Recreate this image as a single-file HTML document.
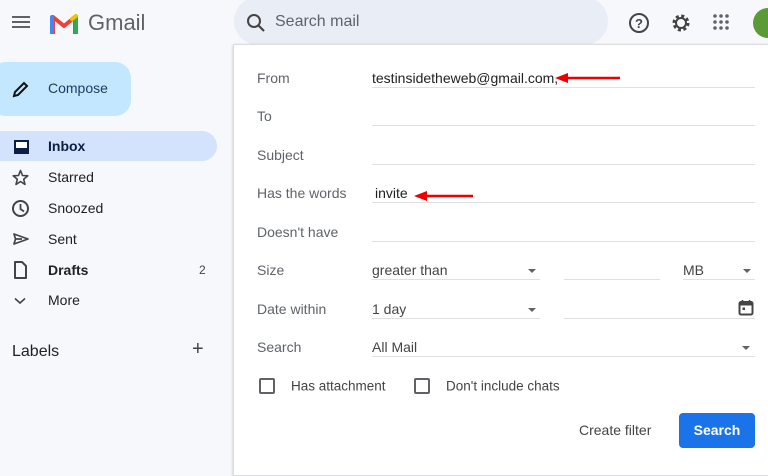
<!DOCTYPE html><html><head><style>
body{margin:0;width:768px;height:462px;overflow:hidden;background:#f6f8fc;font-family:"Liberation Sans",sans-serif;position:relative;color:#444}
.a{position:absolute}
.lbl{position:absolute;left:257px;font-size:14px;color:#5f6368;transform:translateY(-50%)}
.val{position:absolute;font-size:14px;color:#202124;transform:translateY(-50%)}
.ul{position:absolute;height:1px;background:#e0e0e0}
.nav{position:absolute;left:48px;font-size:14px;color:#202124;transform:translateY(-50%)}
.tri{position:absolute;width:0;height:0;border-left:4px solid transparent;border-right:4px solid transparent;border-top:4px solid #5f6368}
.cb{position:absolute;width:12px;height:12px;border:2px solid #5f6368;border-radius:2px}
</style></head><body>
<!-- header -->
<div class="a" style="left:12px;top:16px;width:18px;height:2px;background:#5f6368;box-shadow:0 5px 0 #5f6368,0 10px 0 #5f6368"></div>
<svg class="a" style="left:49px;top:12px" width="30" height="22" viewBox="0 0 30 22"><path d="M4 22V5L15 14 26 5V22" fill="none" stroke="#ea4335" stroke-width="4" stroke-linejoin="round"/><path d="M3 22V5" stroke="#4285f4" stroke-width="4" stroke-linecap="round"/><path d="M27 22V5" stroke="#34a853" stroke-width="4" stroke-linecap="round"/><path d="M23 7L27 4" stroke="#fbbc04" stroke-width="4" stroke-linecap="round"/></svg>
<div class="a" style="left:88px;top:10px;font-size:22px;color:#5f6368">Gmail</div>
<div class="a" style="left:234px;top:-3px;width:374px;height:48px;background:#e9eef6;border-radius:24px"></div>
<svg class="a" style="left:246px;top:13px" width="20" height="20"><circle cx="8" cy="8" r="6" fill="none" stroke="#444" stroke-width="2"/><path d="M12.5 12.5L18 18" stroke="#444" stroke-width="2.2"/></svg>
<div class="a" style="left:275px;top:13px;font-size:16px;color:#5f6368">Search mail</div>
<svg class="a" style="left:628px;top:12px" width="22" height="22"><circle cx="11" cy="11" r="9" fill="none" stroke="#444" stroke-width="2"/><text x="11" y="16" font-size="13" text-anchor="middle" fill="#444" font-family="Liberation Sans" font-weight="bold">?</text></svg>
<svg class="a" style="left:670px;top:12px" width="22" height="22"><circle cx="11" cy="11" r="7" fill="none" stroke="#444" stroke-width="3" stroke-dasharray="3 2.5"/><circle cx="11" cy="11" r="5" fill="none" stroke="#444" stroke-width="2"/></svg>
<svg class="a" style="left:713px;top:14px" width="16" height="16" fill="#5f6368"><circle cx="2" cy="2" r="1.8"/><circle cx="8" cy="2" r="1.8"/><circle cx="14" cy="2" r="1.8"/><circle cx="2" cy="8" r="1.8"/><circle cx="8" cy="8" r="1.8"/><circle cx="14" cy="8" r="1.8"/><circle cx="2" cy="14" r="1.8"/><circle cx="8" cy="14" r="1.8"/><circle cx="14" cy="14" r="1.8"/></svg>
<div class="a" style="left:753px;top:8px;width:30px;height:30px;border-radius:50%;background:#5a9a37"></div>
<!-- sidebar -->
<div class="a" style="left:-10px;top:62px;width:141px;height:54px;background:#c2e7ff;border-radius:16px"></div>
<svg class="a" style="left:11px;top:79px" width="20" height="20"><path d="M3 17L4 13 13 4 16 7 7 16Z" fill="none" stroke="#111" stroke-width="2"/></svg>
<div class="a" style="left:48px;top:80px;font-size:14px;color:#1f3a5f">Compose</div>
<div class="a" style="left:0;top:131px;width:217px;height:30px;background:#d3e3fd;border-radius:0 16px 16px 0"></div>
<div class="a" style="left:14px;top:140px;width:11px;height:10px;border:2px solid #0b1f44;background:#fff;box-shadow:inset 0 -4px 0 #0b1f44"></div>
<div class="nav" style="top:146px;font-weight:bold;color:#0b1f44">Inbox</div>
<svg class="a" style="left:12px;top:169px" width="17" height="17"><path d="M8.5 1.5L10.5 6.5 15.8 6.8 11.7 10.2 13 15.4 8.5 12.5 4 15.4 5.3 10.2 1.2 6.8 6.5 6.5Z" fill="none" stroke="#444" stroke-width="1.6" stroke-linejoin="round"/></svg>
<div class="nav" style="top:177px">Starred</div>
<svg class="a" style="left:11px;top:199px" width="19" height="19"><circle cx="9.5" cy="9.5" r="7.5" fill="none" stroke="#444" stroke-width="2"/><path d="M9.5 5V10L13 12.5" fill="none" stroke="#444" stroke-width="1.8"/></svg>
<div class="nav" style="top:208px">Snoozed</div>
<svg class="a" style="left:12px;top:232px" width="18" height="14"><path d="M2 2L16 7 2 12 3.5 7Z M3.5 7H10" fill="none" stroke="#444" stroke-width="1.7" stroke-linejoin="round"/></svg>
<div class="nav" style="top:239px">Sent</div>
<svg class="a" style="left:13px;top:261px" width="15" height="18"><path d="M2 1H9L13 5V17H2Z" fill="none" stroke="#444" stroke-width="2" stroke-linejoin="round"/></svg>
<div class="nav" style="top:270px;font-weight:bold">Drafts</div>
<div class="a" style="left:199px;top:263px;font-size:12px;color:#444">2</div>
<svg class="a" style="left:14px;top:297px" width="12" height="8"><path d="M1 1.5L6 6 11 1.5" fill="none" stroke="#444" stroke-width="1.6"/></svg>
<div class="nav" style="top:300px">More</div>
<div class="a" style="left:12px;top:343px;font-size:16px;color:#202124">Labels</div>
<div class="a" style="left:192px;top:338px;font-size:20px;color:#444">+</div>
<!-- panel -->
<div class="a" style="left:233px;top:44px;width:540px;height:430px;background:#fff;border:1px solid #dadce0;box-shadow:0 1px 3px rgba(0,0,0,.2)"></div>
<div class="lbl" style="top:78px">From</div><div class="val" style="left:372px;top:78px">testinsidetheweb@gmail.com,</div><div class="ul" style="left:372px;width:383px;top:87px"></div>
<div class="lbl" style="top:116px">To</div><div class="ul" style="left:372px;width:383px;top:125px"></div>
<div class="lbl" style="top:155px">Subject</div><div class="ul" style="left:372px;width:383px;top:164px"></div>
<div class="lbl" style="top:193px">Has the words</div><div class="val" style="left:375px;top:193px">invite</div><div class="ul" style="left:372px;width:383px;top:202px"></div>
<div class="lbl" style="top:232px">Doesn't have</div><div class="ul" style="left:372px;width:383px;top:241px"></div>
<div class="lbl" style="top:270px">Size</div><div class="val" style="left:372px;top:270px;color:#444">greater than</div><div class="tri" style="left:528px;top:269px"></div><div class="ul" style="left:372px;width:168px;top:279px"></div><div class="ul" style="left:564px;width:96px;top:279px"></div><div class="val" style="left:683px;top:270px;color:#444">MB</div><div class="tri" style="left:743px;top:269px"></div><div class="ul" style="left:683px;width:72px;top:279px"></div>
<div class="lbl" style="top:309px">Date within</div><div class="val" style="left:372px;top:309px;color:#444">1 day</div><div class="tri" style="left:528px;top:308px"></div><div class="ul" style="left:372px;width:168px;top:318px"></div><div class="ul" style="left:564px;width:191px;top:318px"></div>
<svg class="a" style="left:738px;top:299px" width="16" height="17"><rect x="1.5" y="3" width="13" height="12.5" rx="1.5" fill="none" stroke="#444" stroke-width="2"/><path d="M1.5 5H14.5" stroke="#444" stroke-width="3"/><path d="M4.5 1V4M11.5 1V4" stroke="#444" stroke-width="1.6"/><rect x="4.5" y="8.5" width="2.5" height="2.5" fill="#444"/></svg>
<div class="lbl" style="top:347px">Search</div><div class="val" style="left:372px;top:347px;color:#444">All Mail</div><div class="tri" style="left:742px;top:346px"></div><div class="ul" style="left:372px;width:383px;top:356px"></div>
<div class="cb" style="left:259px;top:378px"></div><div class="val" style="left:291px;top:386px;color:#444;font-size:13.5px">Has attachment</div>
<div class="cb" style="left:414px;top:378px"></div><div class="val" style="left:446px;top:386px;color:#444;font-size:13.5px">Don't include chats</div>
<div class="a" style="left:579px;top:422px;font-size:14px;color:#444">Create filter</div>
<div class="a" style="left:679px;top:413px;width:76px;height:35px;background:#1a73e8;border-radius:4px;color:#fff;font-size:14px;font-weight:bold;text-align:center;line-height:35px">Search</div>
<!-- arrows -->
<svg class="a" style="left:554px;top:72px" width="68" height="12"><path d="M12 6H66" stroke="#e00" stroke-width="2.5"/><path d="M1 6L14 1V11Z" fill="#e00"/></svg>
<svg class="a" style="left:413px;top:190px" width="62" height="12"><path d="M12 6H60" stroke="#e00" stroke-width="2.5"/><path d="M1 6L14 1V11Z" fill="#e00"/></svg>
</body></html>
